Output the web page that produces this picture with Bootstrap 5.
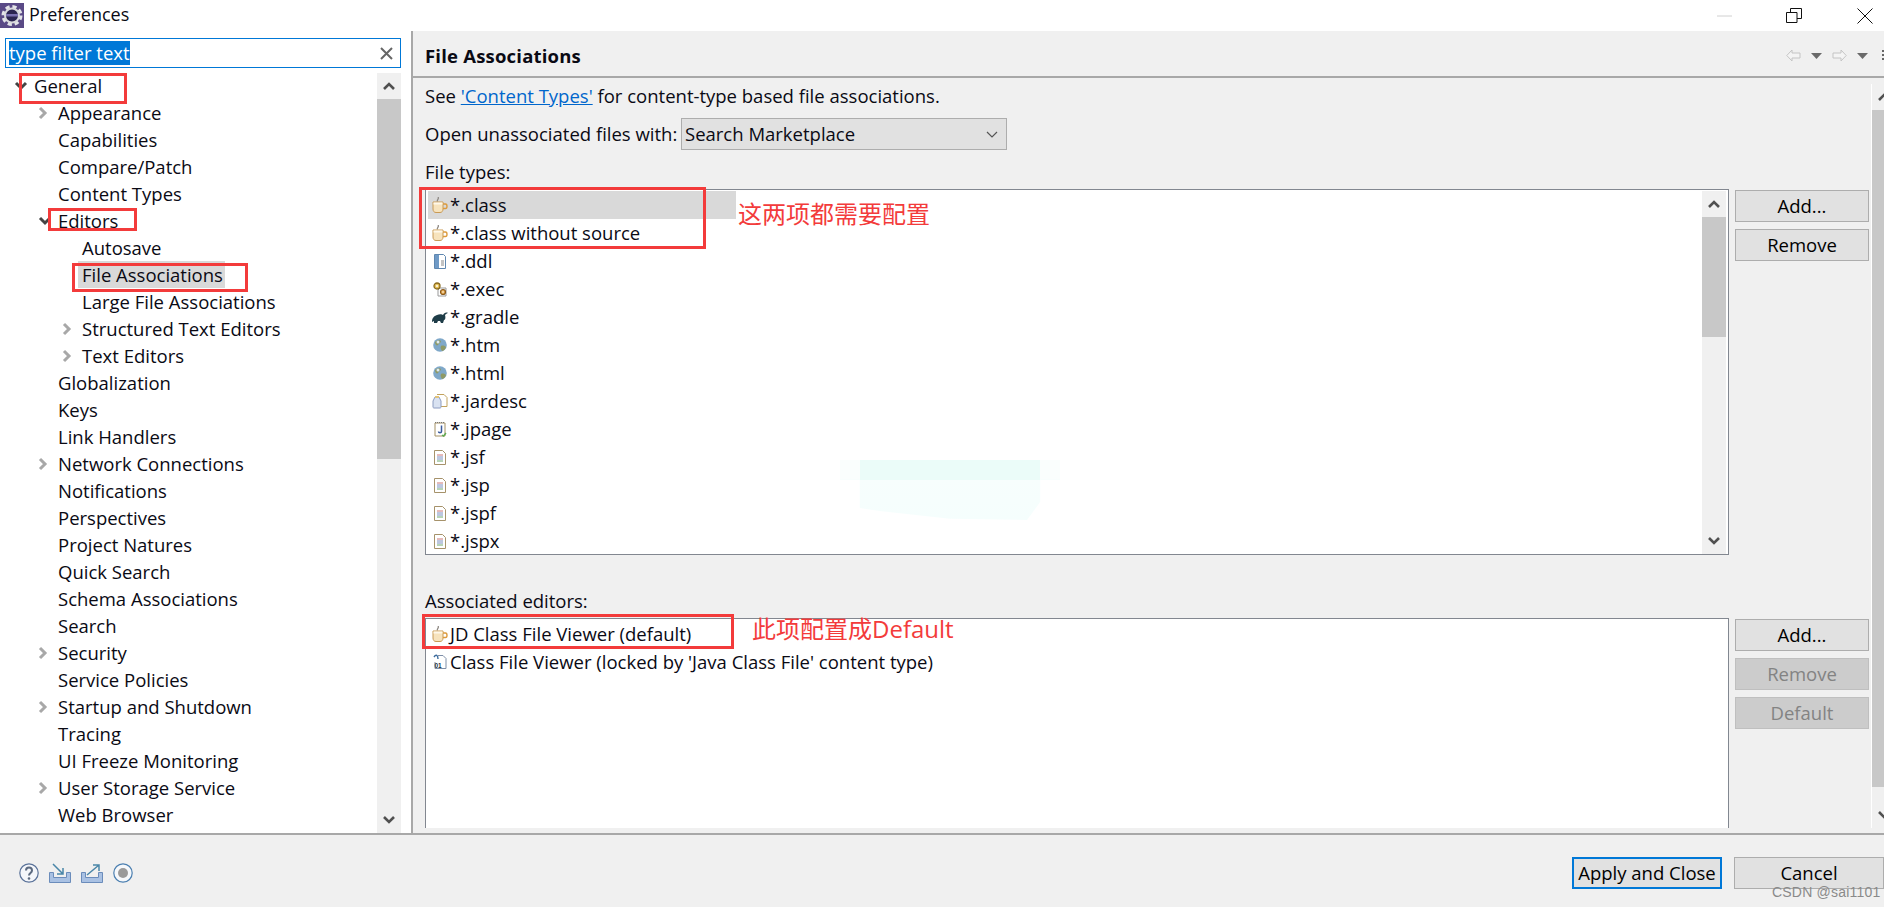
<!DOCTYPE html>
<html lang="en"><head><meta charset="utf-8"><title>Preferences</title>
<link href="https://cdn.jsdelivr.net/npm/bootstrap@5.3.0/dist/css/bootstrap.min.css" rel="stylesheet">
<style>
html,body{height:907px;overflow:hidden}
body{font-family:"Open Sans","Noto Sans CJK SC",sans-serif;font-size:18.5px;color:#0a0a14;background:#fff;line-height:24px}
.dlg{height:907px;position:relative;overflow:hidden}
.titlebar{height:31px}
.titlebar .ttl{margin-left:5px;font-size:18px;margin-top:-4px}
.winbtns{margin-left:auto}
.mainrow{height:802px}
.leftp{width:411px;flex:none;border-right:2px solid #a8a8a8;box-sizing:content-box}
.search{margin:7px 10px 5px 5px;height:30px;border:1px solid #0078d7;padding:0 3px}
.search .sel{background:#0078d7;color:#fff;line-height:24px}
.treewrap{height:760px;padding-right:10px}
.tree{flex:1;min-width:0;overflow:hidden;margin-top:-1px}
.trow{height:27px;line-height:27px}
.l0{padding-left:10px}.l1{padding-left:34px}.l2{padding-left:58px}
.slot{width:24px;flex:none;display:flex;align-items:center;justify-content:flex-start}
.hl{background:#d9d9d9;padding-right:2px;margin-left:-4px;padding-left:4px;line-height:27px}
.sb{width:24px;flex:none;background:#f0f0f0;display:flex;flex-direction:column}
.sbtn{height:26px;flex:none;display:flex;align-items:center;justify-content:center}
.thumb{background:#c8c8c8}
.t1{height:360px}.t2{height:120px}.t3{height:677px}
.rightp{background:#f0f0f0;min-width:0}
.rhead{height:47px;border-bottom:2px solid #a8a8a8;padding:4px 0 0 12px}
.rhead .ttl2{font-weight:700;font-size:18.5px;letter-spacing:.2px}
.navic{gap:10px}
.dots{margin-left:4px}
.rbody{height:755px}
.rmain{padding:6px 0 0 12px;min-width:0;flex:1}
.rowline{height:24px;line-height:24px}
.rowline a{color:#0066cc;text-decoration:underline}
.combo{width:326px;height:32px;margin-left:auto;background:#e1e1e1;border:1px solid #adadad;padding:0 4px 0 3px;line-height:28px}
.openrow{height:32px;margin-top:10px;width:582px}
.flist{border:1px solid #828790;background:#fff;width:1304px;padding:1px 0 0 2px;overflow:hidden}
.types{height:366px}
.eds{height:210px;border-bottom:0}
.fr{height:28px;line-height:28px;width:308px}
.fr.on{background:#d9d9d9}
.fi{width:22px;flex:none;display:flex;align-items:center;padding-left:4px}
.wide{width:auto;white-space:nowrap}
.flistinner{flex:1;min-width:0}
.sb2{margin-right:2px}
.btnsd{width:134px;margin-left:6px;padding-top:1px;gap:7px}
.ebtn{height:32px;width:134px;background:#e1e1e1;border:1px solid #adadad;color:#000;border-radius:0;padding:0;font-size:18.5px;line-height:28px}
.ebtn.dis{background:#cccccc;color:#838383;border-color:#bfbfbf}
.outsb{width:12px;flex:none;margin-top:6px;height:744px;background:#f0f0f0;border-left:1px solid #fff;overflow:hidden;box-sizing:content-box}
.bottom{height:74px;border-top:2px solid #a8a8a8;background:#f0f0f0;padding:22px 0 0 19px}
.bicons{gap:10px;margin-top:6px}
.bbtns{margin-left:auto;gap:12px}
.bb{width:150px;height:32px}
.bb.pri{border:2px solid #0078d7}
.redbox{position:absolute;border:3px solid #f33b3b;pointer-events:none}
.redtxt{position:absolute;color:#f33b3b;font-family:"Open Sans","Noto Sans CJK SC",sans-serif;font-size:24px;line-height:30px;white-space:nowrap}
.wm{position:absolute;left:1772px;top:882px;font-family:"Liberation Sans",sans-serif;font-size:14px;line-height:20px;color:#8a8a8a;letter-spacing:.2px}
.smudge{position:absolute;left:840px;top:460px;width:220px;height:60px;background:linear-gradient(90deg,rgba(255,255,255,.75) 0,rgba(255,255,255,.75) 9%,rgba(255,255,255,0) 9%,rgba(255,255,255,0) 91%,rgba(255,255,255,.75) 91%),linear-gradient(180deg,#ebfcf9 0,#ebfcf9 20px,#f7fefd 20px,#f5fefd 100%);clip-path:polygon(0 0,100% 0,100% 33%,91% 33%,91% 70%,85% 100%,50% 98%,18% 85%,9% 80%,9% 33%,0 33%)}
svg{display:block;flex:none}
</style></head><body>
<svg width="0" height="0" style="position:absolute">
<defs>
<symbol id="cr" viewBox="0 0 10 14"><path d="M2 2l5 5-5 5" fill="none" stroke="#a8a8a8" stroke-width="3"/></symbol>
<symbol id="cd" viewBox="0 0 14 10"><path d="M2 2l5 5 5-5" fill="none" stroke="#444" stroke-width="3"/></symbol>
<symbol id="up" viewBox="0 0 14 10"><path d="M2 8l5-5 5 5" fill="none" stroke="#505050" stroke-width="2.6"/></symbol>
<symbol id="dn" viewBox="0 0 14 10"><path d="M2 2l5 5 5-5" fill="none" stroke="#505050" stroke-width="2.6"/></symbol>
<symbol id="cup" viewBox="0 0 16 16"><path d="M6 0c1.500 2-1.500 2.500-.5 4.500" fill="none" stroke="#8f8a84" stroke-width="1.300"/><path d="M1 5h10v7c0 2-1 3.500-3 3.500H4c-2 0-3-1.500-3-3.500z" fill="#f7e3bd" stroke="#c99a55"/><path d="M1.500 5.500h9v2h-9z" fill="#fff8ea"/><path d="M11 7h2.500c2 0 2 4.500 0 4.500H11" fill="none" stroke="#dc9a3c" stroke-width="1.400"/></symbol>
<symbol id="page" viewBox="0 0 16 16"><path d="M2.500 1.500h8l3 3v11h-11z" fill="#fff" stroke="#a6926a"/><path d="M5 6h6" stroke="#c77"/><path d="M5 8h6" stroke="#7a8fc0"/><path d="M5 10h6" stroke="#7a8fc0"/><path d="M5 12h6" stroke="#6ea86e"/></symbol>
<symbol id="globe" viewBox="0 0 16 16"><circle cx="8" cy="8" r="6.800" fill="#7fa8c9"/><path d="M3 5c2-2 5-2 6-1 0 2-2 2-3 4-1 1-3 0-3-3zM9 9c2-1 4 0 5 1-1 3-3 4-4 4-1-2-2-3-1-5z" fill="#8f9a66"/><circle cx="6" cy="5" r="1.500" fill="#dfeaf3"/></symbol>
<symbol id="ddl" viewBox="0 0 16 16"><path d="M2.500 1.500h9l2 2v12h-11z" fill="#fff" stroke="#5f87b0"/><path d="M3 2h4v13H3z" fill="#6f9ac6"/><path d="M9 8h3M9 10h3M9 12h3" stroke="#888"/></symbol>
<symbol id="gear" viewBox="0 0 16 16"><path d="M8 7h6v8H6V9z" fill="#fff" stroke="#999"/><circle cx="5" cy="5" r="3" fill="#e6c35c" stroke="#8a6a1e" stroke-width="1.300"/><circle cx="5" cy="5" r="1" fill="#fff"/><circle cx="11" cy="11" r="2.500" fill="#e6a94c" stroke="#8a5a1e" stroke-width="1.200"/><circle cx="11" cy="11" r=".8" fill="#fff"/></symbol>
<symbol id="ele" viewBox="0 0 16 16"><path d="M0 13c0-4 2-6 5-7 2-1 5-1 6 0 1-2 3-3 5-2-1 0-2 1-3 2 1 3 0 5-1 5l-1 3H9l-1-2H6l-1 2H2v-2z" fill="#1f3d48"/></symbol>
<symbol id="jar" viewBox="0 0 16 16"><path d="M5 1.500h7l3 3v9H8" fill="#fff" stroke="#c2a25c"/><path d="M2 6l1-2h4l1 2 1 2v6c0 1-1 1-1 1H2s-1 0-1-1V8z" fill="#d9e2f1" stroke="#8c9cc0"/><path d="M3 3h4v2H3z" fill="#e0c27a"/></symbol>
<symbol id="jpg" viewBox="0 0 16 16"><path d="M3 2h10v13H3z" fill="#fff" stroke="#a39064"/><path d="M3 1.500h10" stroke="#777" stroke-dasharray="1 1"/><path d="M9.500 4.500v6c0 1.500-3 1.500-3 0" fill="none" stroke="#3a5a9c" stroke-width="1.500"/><path d="M10 14l1.500 1 2.500-3" fill="none" stroke="#5caa50" stroke-width="1.400"/></symbol>
<symbol id="cfile" viewBox="0 0 16 16"><path d="M6 1.500h5l3 3v10H3V8" fill="#fff" stroke="#7f8fa8"/><path d="M2 3c2-3 4-2 4 2" fill="none" stroke="#3a6a9c" stroke-width="1.400"/><text x="2.500" y="14" font-size="6.500" font-family="Liberation Sans,sans-serif" font-weight="700" fill="#234" letter-spacing="0">01</text></symbol>
</defs></svg>

<div class="dlg d-flex flex-column">
  <div class="titlebar d-flex align-items-center">
    <svg width="24" height="25" viewBox="0 0 24 25"><rect width="24" height="25" fill="#5a4a86"/><circle cx="12" cy="12.500" r="8.500" fill="none" stroke="#e4e4e8" stroke-width="4" stroke-dasharray="4 2.700"/><circle cx="12" cy="12.500" r="7" fill="#2b2450" stroke="#d8d8dc" stroke-width="2"/><path d="M6 11h12v2.500H6z" fill="#7a70b0"/></svg>
    <span class="ttl">Preferences</span>
    <div class="winbtns d-flex align-items-center">
      <svg width="15" height="2" viewBox="0 0 15 2"><path d="M0 1h15" stroke="#d0d0d0"/></svg>
      <svg width="16" height="15" viewBox="0 0 16 15" style="margin-left:54px"><path d="M.5 4.500h10.500v10H.5zM4.500 4.500V.5h11v10h-4.500" fill="none" stroke="#111"/></svg>
      <svg width="16" height="16" viewBox="0 0 16 16" style="margin:0 11px 0 55px"><path d="M.5.500l15 15M15.500.500l-15 15" stroke="#111"/></svg>
    </div>
  </div>

  <div class="mainrow d-flex">
    <div class="leftp d-flex flex-column">
      <div class="search d-flex align-items-center justify-content-between">
        <span class="sel">type filter text</span>
        <svg class="me-1" width="13" height="13" viewBox="0 0 13 13"><path d="M1 1l11 11M12 1L1 12" stroke="#666" stroke-width="2"/></svg>
      </div>
      <div class="treewrap d-flex">
        <div class="tree" id="tree">
          <div class="trow d-flex l0"><span class="slot"><svg class="ms-1" width="14" height="10"><use href="#cd"/></svg></span>General</div>
          <div class="trow d-flex l1"><span class="slot"><svg class="ms-1" width="10" height="14"><use href="#cr"/></svg></span>Appearance</div>
          <div class="trow d-flex l1"><span class="slot"></span>Capabilities</div>
          <div class="trow d-flex l1"><span class="slot"></span>Compare/Patch</div>
          <div class="trow d-flex l1"><span class="slot"></span>Content Types</div>
          <div class="trow d-flex l1"><span class="slot"><svg class="ms-1" width="14" height="10"><use href="#cd"/></svg></span>Editors</div>
          <div class="trow d-flex l2"><span class="slot"></span>Autosave</div>
          <div class="trow d-flex l2"><span class="slot"></span><span class="hl">File Associations</span></div>
          <div class="trow d-flex l2"><span class="slot"></span>Large File Associations</div>
          <div class="trow d-flex l2"><span class="slot"><svg class="ms-1" width="10" height="14"><use href="#cr"/></svg></span>Structured Text Editors</div>
          <div class="trow d-flex l2"><span class="slot"><svg class="ms-1" width="10" height="14"><use href="#cr"/></svg></span>Text Editors</div>
          <div class="trow d-flex l1"><span class="slot"></span>Globalization</div>
          <div class="trow d-flex l1"><span class="slot"></span>Keys</div>
          <div class="trow d-flex l1"><span class="slot"></span>Link Handlers</div>
          <div class="trow d-flex l1"><span class="slot"><svg class="ms-1" width="10" height="14"><use href="#cr"/></svg></span>Network Connections</div>
          <div class="trow d-flex l1"><span class="slot"></span>Notifications</div>
          <div class="trow d-flex l1"><span class="slot"></span>Perspectives</div>
          <div class="trow d-flex l1"><span class="slot"></span>Project Natures</div>
          <div class="trow d-flex l1"><span class="slot"></span>Quick Search</div>
          <div class="trow d-flex l1"><span class="slot"></span>Schema Associations</div>
          <div class="trow d-flex l1"><span class="slot"></span>Search</div>
          <div class="trow d-flex l1"><span class="slot"><svg class="ms-1" width="10" height="14"><use href="#cr"/></svg></span>Security</div>
          <div class="trow d-flex l1"><span class="slot"></span>Service Policies</div>
          <div class="trow d-flex l1"><span class="slot"><svg class="ms-1" width="10" height="14"><use href="#cr"/></svg></span>Startup and Shutdown</div>
          <div class="trow d-flex l1"><span class="slot"></span>Tracing</div>
          <div class="trow d-flex l1"><span class="slot"></span>UI Freeze Monitoring</div>
          <div class="trow d-flex l1"><span class="slot"><svg class="ms-1" width="10" height="14"><use href="#cr"/></svg></span>User Storage Service</div>
          <div class="trow d-flex l1"><span class="slot"></span>Web Browser</div>
        </div>
        <div class="sb">
          <div class="sbtn"><svg width="14" height="10"><use href="#up"/></svg></div>
          <div class="thumb t1"></div>
          <div class="flex-grow-1"></div>
          <div class="sbtn"><svg width="14" height="10"><use href="#dn"/></svg></div>
        </div>
      </div>
    </div>

    <div class="rightp flex-grow-1 d-flex flex-column">
      <div class="rhead d-flex align-items-center justify-content-between">
        <span class="ttl2">File Associations</span>
        <div class="navic d-flex align-items-center">
          <svg width="15" height="13" viewBox="0 0 15 13"><path d="M.8 6.500L6 1v3h8v5H6v3z" fill="#f4f4f4" stroke="#c4c4c4"/></svg>
          <svg width="11" height="6" viewBox="0 0 11 6"><path d="M0 0h11L5.500 6z" fill="#6a6a6a"/></svg>
          <svg width="15" height="13" viewBox="0 0 15 13"><path d="M14.200 6.500L9 1v3H1v5h8v3z" fill="#f4f4f4" stroke="#c4c4c4"/></svg>
          <svg width="11" height="6" viewBox="0 0 11 6"><path d="M0 0h11L5.500 6z" fill="#6a6a6a"/></svg>
          <svg class="dots" width="2" height="12" viewBox="0 0 2 12"><path d="M1 0v12" stroke="#666" stroke-width="2" stroke-dasharray="2 2"/></svg>
        </div>
      </div>
      <div class="rbody d-flex">
        <div class="rmain">
          <div class="rowline">See <a href="#">'Content Types'</a> for content-type based file associations.</div>
          <div class="rowline openrow d-flex align-items-center">Open unassociated files with:
            <div class="combo d-flex align-items-center justify-content-between">Search Marketplace
              <svg class="me-1" width="12" height="7" viewBox="0 0 12 7"><path d="M1 1l5 5 5-5" fill="none" stroke="#555" stroke-width="1.200"/></svg>
            </div>
          </div>
          <div class="rowline" style="margin-top:10px;margin-bottom:5px">File types:</div>
          <div class="d-flex">
            <div class="flist types d-flex">
              <div class="flistinner">
                <div class="fr on d-flex"><span class="fi"><svg width="16" height="16"><use href="#cup"/></svg></span>*.class</div>
                <div class="fr d-flex wide"><span class="fi"><svg width="16" height="16"><use href="#cup"/></svg></span>*.class without source</div>
                <div class="fr d-flex"><span class="fi"><svg width="16" height="16"><use href="#ddl"/></svg></span>*.ddl</div>
                <div class="fr d-flex"><span class="fi"><svg width="16" height="16"><use href="#gear"/></svg></span>*.exec</div>
                <div class="fr d-flex"><span class="fi"><svg width="16" height="16"><use href="#ele"/></svg></span>*.gradle</div>
                <div class="fr d-flex"><span class="fi"><svg width="16" height="16"><use href="#globe"/></svg></span>*.htm</div>
                <div class="fr d-flex"><span class="fi"><svg width="16" height="16"><use href="#globe"/></svg></span>*.html</div>
                <div class="fr d-flex"><span class="fi"><svg width="16" height="16"><use href="#jar"/></svg></span>*.jardesc</div>
                <div class="fr d-flex"><span class="fi"><svg width="16" height="16"><use href="#jpg"/></svg></span>*.jpage</div>
                <div class="fr d-flex"><span class="fi"><svg width="16" height="16"><use href="#page"/></svg></span>*.jsf</div>
                <div class="fr d-flex"><span class="fi"><svg width="16" height="16"><use href="#page"/></svg></span>*.jsp</div>
                <div class="fr d-flex"><span class="fi"><svg width="16" height="16"><use href="#page"/></svg></span>*.jspf</div>
                <div class="fr d-flex"><span class="fi"><svg width="16" height="16"><use href="#page"/></svg></span>*.jspx</div>
              </div>
              <div class="sb sb2">
                <div class="sbtn"><svg width="14" height="10"><use href="#up"/></svg></div>
                <div class="thumb t2"></div>
                <div class="flex-grow-1"></div>
                <div class="sbtn"><svg width="14" height="10"><use href="#dn"/></svg></div>
              </div>
            </div>
            <div class="btnsd d-flex flex-column">
              <button class="btn ebtn" type="button">Add...</button>
              <button class="btn ebtn" type="button">Remove</button>
            </div>
          </div>
          <div class="rowline" style="margin-top:34px;margin-bottom:5px">Associated editors:</div>
          <div class="d-flex">
            <div class="flist eds">
              <div class="fr d-flex wide"><span class="fi"><svg width="16" height="16"><use href="#cup"/></svg></span>JD Class File Viewer (default)</div>
              <div class="fr d-flex wide"><span class="fi"><svg width="16" height="16"><use href="#cfile"/></svg></span>Class File Viewer (locked by 'Java Class File' content type)</div>
            </div>
            <div class="btnsd d-flex flex-column">
              <button class="btn ebtn" type="button">Add...</button>
              <button class="btn ebtn dis" type="button">Remove</button>
              <button class="btn ebtn dis" type="button">Default</button>
            </div>
          </div>
        </div>
        <div class="outsb d-flex flex-column">
          <div class="sbtn" style="width:24px"><svg width="14" height="10"><use href="#up"/></svg></div>
          <div class="thumb t3" style="width:24px"></div>
          <div class="flex-grow-1"></div>
          <div class="sbtn" style="width:24px"><svg width="14" height="10"><use href="#dn"/></svg></div>
        </div>
      </div>
    </div>
  </div>

  <div class="bottom d-flex align-items-start">
    <div class="bicons d-flex align-items-center">
      <svg width="20" height="20" viewBox="0 0 20 20"><circle cx="10" cy="10" r="9.200" fill="#f4f6fa" stroke="#5a7299" stroke-width="1.200"/><path d="M7 7.500c0-4 6-4 6 0 0 2.500-3 2.500-3 5" fill="none" stroke="#5c6a80" stroke-width="2"/><circle cx="10" cy="15.500" r="1.300" fill="#5c6a80"/></svg>
      <svg width="22" height="20" viewBox="0 0 22 20"><path d="M.5 9.500h4v5h13v-5h4v10H.5z" fill="#a9c1e3" stroke="#6b8cbb"/><path d="M4 1l10 10m0-6v6H8" fill="none" stroke="#4a86a8" stroke-width="1.500"/></svg>
      <svg width="22" height="20" viewBox="0 0 22 20"><path d="M.5 9.500h4v5h13v-5h4v10H.5z" fill="#a9c1e3" stroke="#6b8cbb"/><path d="M6 12L18 2m-6 0h6v6" fill="none" stroke="#4a86a8" stroke-width="1.500"/></svg>
      <svg width="20" height="20" viewBox="0 0 20 20"><circle cx="10" cy="10" r="9.200" fill="#f6f8fb" stroke="#4b7fb0" stroke-width="1.200"/><circle cx="10" cy="10" r="5" fill="#9a9a9a"/></svg>
    </div>
    <div class="bbtns d-flex">
      <button class="btn ebtn bb pri" type="button">Apply and Close</button>
      <button class="btn ebtn bb" type="button">Cancel</button>
    </div>
  </div>

  <div class="smudge"></div>
  <div class="redbox" style="left:19px;top:73px;width:108px;height:31px"></div>
  <div class="redbox" style="left:48px;top:208px;width:89px;height:23px"></div>
  <div class="redbox" style="left:72px;top:263px;width:176px;height:29px"></div>
  <div class="redbox" style="left:419px;top:187px;width:287px;height:62px"></div>
  <div class="redbox" style="left:422px;top:614px;width:312px;height:35px"></div>
  <div class="redtxt" style="left:738px;top:199px">这两项都需要配置</div>
  <div class="redtxt" style="left:752px;top:614px">此项配置成Default</div>
  <div class="wm">CSDN @sai1101</div>
</div>
<script src="https://cdn.jsdelivr.net/npm/bootstrap@5.3.0/dist/js/bootstrap.bundle.min.js"></script>
</body></html>
